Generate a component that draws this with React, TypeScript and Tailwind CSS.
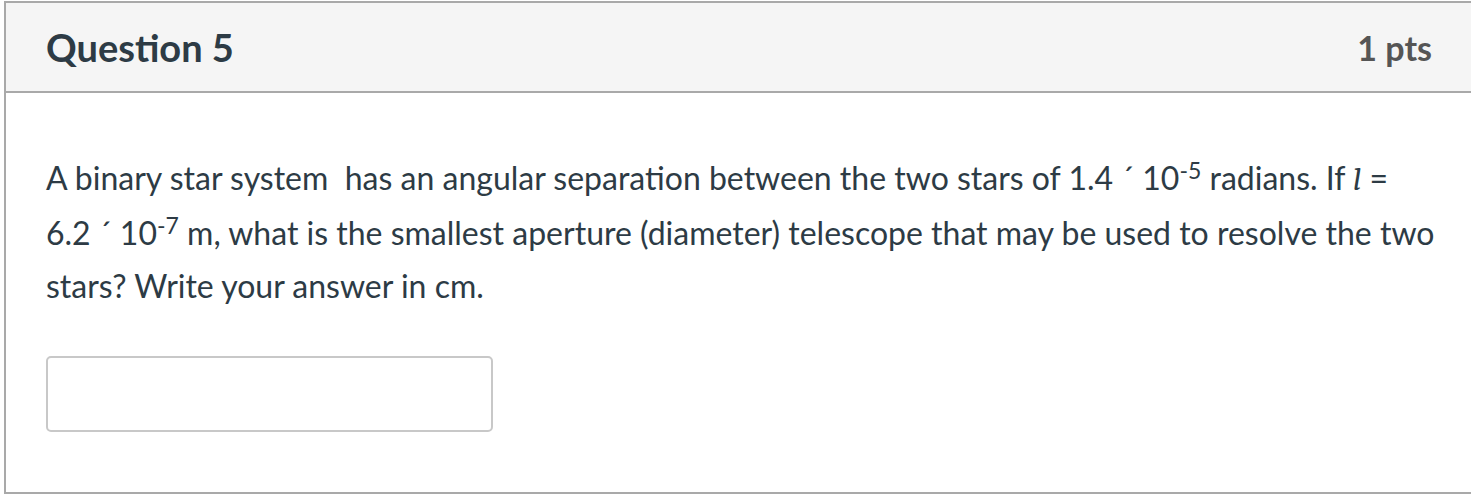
export default function App() {
  return (
    <div
      className="w-[1471px] h-[496px] bg-white pt-px pl-1"
      style={{ fontFamily: 'Lato, "Noto Sans", sans-serif' }}
    >
      <div className="border-2 border-r-0 border-[#a9a9a9]">
        <div className="h-[90px] bg-[#f5f5f5] border-b-2 border-[#a9a9a9] flex items-center justify-between pl-10 pr-[39px]">
          <h2 className="text-[38px] font-bold text-[#2d3b45]">Question 5</h2>
          <span className="text-[34px] font-bold text-[#555555]">1 pts</span>
        </div>
        <div className="pl-10 pr-4 pt-[58px] pb-[60px]">
          <p className="text-[32px] leading-[53px] text-[#2d3b45] whitespace-nowrap">
            A binary star system&nbsp; has an angular separation between the two stars of 1.4 ´ 10
            <sup className="text-[23px] leading-none">-5</sup> radians. If <i className="font-serif">l</i> =
            <br />
            6.2 ´ 10<sup className="text-[23px] leading-none">-7</sup> m, what is the smallest aperture
            (diameter) telescope that may be used to resolve the two
            <br />
            stars? Write your answer in cm.
          </p>
          <input
            type="text"
            className="mt-[44px] block w-[447px] h-[76px] border-2 border-[#c8c8c8] rounded-[5px] bg-white"
          />
        </div>
      </div>
    </div>
  );
}
